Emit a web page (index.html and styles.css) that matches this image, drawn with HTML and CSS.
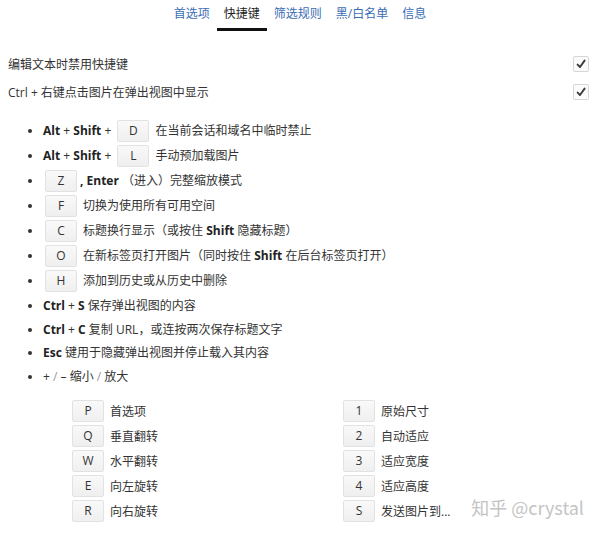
FILE: index.html
```html
<!DOCTYPE html>
<html lang="zh">
<head>
<meta charset="utf-8">
<link rel="stylesheet" href="styles.css">
</head>
<body>
<nav class="tabs">
  <a class="tab">首选项</a>
  <a class="tab active">快捷键</a>
  <a class="tab">筛选规则</a>
  <a class="tab">黑/白名单</a>
  <a class="tab">信息</a>
</nav>

<div class="options">
  <div class="opt">
    <span>编辑文本时禁用快捷键</span>
    <span class="check"><svg width="12" height="12" viewBox="0 0 12 12"><path d="M2.6 6.6 L5 9 L9.6 2.6" fill="none" stroke="#3c3c3c" stroke-width="1.9" stroke-linecap="round" stroke-linejoin="round"/></svg></span>
  </div>
  <div class="opt">
    <span>Ctrl + 右键点击图片在弹出视图中显示</span>
    <span class="check"><svg width="12" height="12" viewBox="0 0 12 12"><path d="M2.6 6.6 L5 9 L9.6 2.6" fill="none" stroke="#3c3c3c" stroke-width="1.9" stroke-linecap="round" stroke-linejoin="round"/></svg></span>
  </div>
</div>

<ul class="list">
  <li class="k"><b>Alt</b> + <b>Shift</b> + <kbd>D</kbd> 在当前会话和域名中临时禁止</li>
  <li class="k"><b>Alt</b> + <b>Shift</b> + <kbd>L</kbd> 手动预加载图片</li>
  <li class="k"><kbd class="first">Z</kbd><b>, Enter</b> （进入）完整缩放模式</li>
  <li class="k"><kbd class="first">F</kbd> 切换为使用所有可用空间</li>
  <li class="k"><kbd class="first">C</kbd> 标题换行显示（或按住 <b>Shift</b> 隐藏标题）</li>
  <li class="k"><kbd class="first">O</kbd> 在新标签页打开图片（同时按住 <b>Shift</b> 在后台标签页打开）</li>
  <li class="k"><kbd class="first">H</kbd> 添加到历史或从历史中删除</li>
  <li class="t"><b>Ctrl</b> + <b>S</b> 保存弹出视图的内容</li>
  <li class="t"><b>Ctrl</b> + <b>C</b> 复制 URL，或连按两次保存标题文字</li>
  <li class="t"><b>Esc</b> 键用于隐藏弹出视图并停止载入其内容</li>
  <li class="t">+ <span class="sep">/</span> – 缩小 <span class="sep">/</span> 放大</li>
</ul>

<div class="grid">
  <div class="cell"><kbd>P</kbd><span>首选项</span></div>
  <div class="cell"><kbd>1</kbd><span>原始尺寸</span></div>
  <div class="cell"><kbd>Q</kbd><span>垂直翻转</span></div>
  <div class="cell"><kbd>2</kbd><span>自动适应</span></div>
  <div class="cell"><kbd>W</kbd><span>水平翻转</span></div>
  <div class="cell"><kbd>3</kbd><span>适应宽度</span></div>
  <div class="cell"><kbd>E</kbd><span>向左旋转</span></div>
  <div class="cell"><kbd>4</kbd><span>适应高度</span></div>
  <div class="cell"><kbd>R</kbd><span>向右旋转</span></div>
  <div class="cell"><kbd>S</kbd><span>发送图片到...</span></div>
</div>

<div class="watermark">知乎 @crystal</div>
</body>
</html>
```

FILE: styles.css
```css
html, body {
  margin: 0;
  padding: 0;
}
body {
  font-family: "Open Sans", "Noto Sans CJK SC", sans-serif;
  font-size: 12px;
  color: #333;
  background: #fff;
  position: relative;
  height: 534px;
  overflow: hidden;
}
.tabs {
  display: flex;
  justify-content: center;
  padding-top: 6px;
}
.tab {
  padding: 0 7px 6px;
  line-height: 16px;
  color: #3b6db3;
  border-bottom: 3px solid transparent;
  cursor: pointer;
}
.tab.active {
  color: #222;
  border-bottom-color: #111;
}
.options {
  margin-top: 19px;
  padding: 0 11px 0 8px;
}
.opt {
  display: flex;
  justify-content: space-between;
  align-items: center;
  height: 28px;
}
.check {
  box-sizing: border-box;
  width: 16px;
  height: 16px;
  border: 1px solid #d6d6d6;
  border-radius: 2px;
  background: #fbfbfb;
  display: flex;
  align-items: center;
  justify-content: center;
}
.list {
  margin: 12px 0 0;
  padding-left: 43px;
}
.list li.t {
  line-height: 23.5px;
  height: 23.5px;
}
.list li.t:first-of-type,
.list li.k + li.t {
  padding-top: 1px;
}
.list li.k {
  height: 25px;
  line-height: 25px;
}
b {
  font-weight: 700;
  color: #222;
}
.sep {
  color: #999;
}
kbd {
  display: inline-block;
  box-sizing: border-box;
  width: 32px;
  height: 22px;
  line-height: 20px;
  text-align: center;
  font-family: inherit;
  font-size: 12px;
  color: #333;
  background: linear-gradient(#f9f9f9, #efefef);
  border: 1px solid #e2e2e2;
  border-radius: 2px;
  vertical-align: middle;
  margin: -2px 3px 0;
}
kbd.first {
  margin-left: 2px;
}
.grid {
  display: grid;
  grid-template-columns: 271px 1fr;
  padding-left: 72px;
  margin-top: 10px;
}
.cell {
  display: flex;
  align-items: center;
  height: 25px;
}
.cell kbd {
  margin: 0 6px 0 0;
}
.watermark {
  position: absolute;
  right: 16px;
  bottom: 15px;
  font-family: "Noto Sans CJK SC", sans-serif;
  font-size: 18px;
  line-height: 24px;
  color: #c4c4c4;
}
```
